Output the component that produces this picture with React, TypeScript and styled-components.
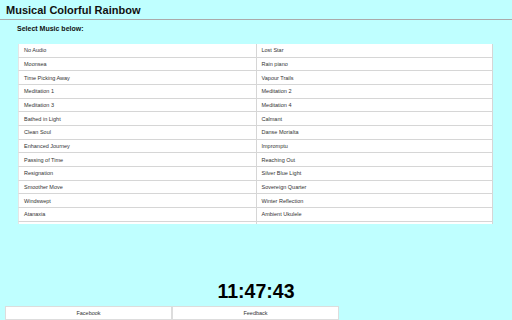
import React from 'react';
import styled, { createGlobalStyle } from 'styled-components';

const GlobalStyle = createGlobalStyle`
  html, body {
    margin: 0;
    padding: 0;
    background: #bfffff;
    font-family: 'Liberation Sans', Arial, sans-serif;
  }
`;

const Page = styled.div`
  height: 320px;
  display: flex;
  flex-direction: column;
  overflow: hidden;
`;
const Header = styled.header`
  height: 19px;
  border-bottom: 1px solid #aaaaaa;
  padding-left: 6px;
  display: flex;
  align-items: center;
`;
const Title = styled.h1`
  margin: 0;
  font-size: 11px;
  font-weight: bold;
  color: #111;
`;
const Prompt = styled.div`
  padding: 5px 0 0 17px;
  height: 19px;
  font-size: 7px;
  font-weight: bold;
  color: #111;
`;
const MusicList = styled.ul`
  list-style: none;
  margin: 0 19px 0 18px;
  padding: 0;
  height: 180px;
  overflow: hidden;
  display: grid;
  grid-template-columns: 1fr 1fr;
  grid-auto-rows: 13.67px;
  background: #ffffff;
`;
const Track = styled.li<{ $right?: boolean }>`
  box-sizing: border-box;
  border-bottom: 1px solid #d6d6d6;
  border-left: ${({ $right }) => ($right ? '1px solid #d6d6d6' : '1px solid #e6e6e6')};
  border-right: ${({ $right }) => ($right ? '1px solid #d6d6d6' : 'none')};
  padding-left: 5px;
  font-size: 5.5px;
  color: #333;
  display: flex;
  align-items: center;
`;
const Spacer = styled.div`
  flex: 1;
`;
const Clock = styled.div`
  text-align: center;
  font-size: 19.5px;
  font-weight: bold;
  color: #000;
  line-height: 22px;
  margin-bottom: 4px;
`;
const Footer = styled.div`
  display: flex;
  padding-left: 5px;
`;
const FooterButton = styled.button`
  width: 167px;
  height: 14px;
  background: #fff;
  border: 1px solid #dddddd;
  font-family: 'Liberation Sans', Arial, sans-serif;
  font-size: 5.5px;
  color: #333;
  padding: 0;
`;

const tracks: [string, string][] = [
  ['No Audio', 'Lost Star'],
  ['Moonsea', 'Rain piano'],
  ['Time Picking Away', 'Vapour Trails'],
  ['Meditation 1', 'Meditation 2'],
  ['Meditation 3', 'Meditation 4'],
  ['Bathed in Light', 'Calmant'],
  ['Clean Soul', 'Danse Morialta'],
  ['Enhanced Journey', 'Impromptu'],
  ['Passing of Time', 'Reaching Out'],
  ['Resignation', 'Silver Blue Light'],
  ['Smoother Move', 'Sovereign Quarter'],
  ['Windswept', 'Winter Reflection'],
  ['Atanaxia', 'Ambient Ukulele'],
  ['', ''],
];

const App = () => {
  return (
    <Page>
      <GlobalStyle />
      <Header>
        <Title>Musical Colorful Rainbow</Title>
      </Header>
      <Prompt>Select Music below:</Prompt>
      <MusicList>
        {tracks.map(([left, right], i) => (
          <React.Fragment key={i}>
            <Track>{left}</Track>
            <Track $right>{right}</Track>
          </React.Fragment>
        ))}
      </MusicList>
      <Spacer />
      <Clock>11:47:43</Clock>
      <Footer>
        <FooterButton>Facebook</FooterButton>
        <FooterButton>Feedback</FooterButton>
      </Footer>
    </Page>
  );
};
export default App;
